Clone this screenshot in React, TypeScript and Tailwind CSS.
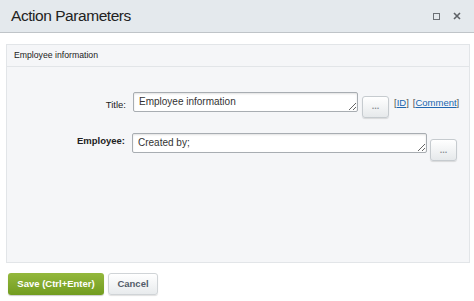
import React from "react";

function DotsButton() {
  return (
    <button className="h-[22px] w-[27px] shrink-0 rounded-[3px] border border-[#c6cbcf] bg-gradient-to-b from-white to-[#e6e9eb] text-[9px] font-bold leading-none text-[#8a9096] shadow-[0_1px_1px_rgba(0,0,0,0.12)]">
      ...
    </button>
  );
}

export default function App() {
  return (
    <div className="flex h-[301px] w-[474px] flex-col bg-white font-['Liberation_Sans',Arial,sans-serif] text-[#222]">
      <header className="flex h-[33px] shrink-0 items-center justify-between border-b border-[#bfc4c8] bg-[#e4e9ed] pl-[11px] pr-[13px]">
        <h1 className="text-[15.5px] tracking-[-0.45px] text-[#222]">Action Parameters</h1>
        <div className="flex items-center gap-[13px] text-[#5d6166]">
          <span className="block h-[7px] w-[7px] border border-[#6b7075]" />
          <svg width="8" height="8" viewBox="0 0 8 8" fill="none" stroke="#5d6166" strokeWidth="1.6">
            <path d="M1 1l6 6M7 1L1 7" />
          </svg>
        </div>
      </header>

      <main className="flex flex-1 flex-col pl-[6px] pr-[4px] pt-[11px]">
        <section className="flex h-[219px] flex-col border border-[#e2e5e8] bg-[#f5f6f8]">
          <div className="flex h-[22px] items-center border-b border-[#e2e5e8] pl-[7px] pt-[1px] text-[8.7px] text-[#222]">
            Employee information
          </div>

          <div className="flex flex-col gap-[15px] pt-[25px]">
            <div className="flex items-start">
              <label className="w-[119px] pt-[6px] text-right text-[9.5px] text-[#222]">Title:</label>
              <textarea
                defaultValue="Employee information"
                className="ml-[7px] h-[20px] w-[225px] resize overflow-hidden rounded-[2px] border border-[#a8adb2] bg-white px-[5px] py-[2px] text-[10px] leading-[14px] text-[#333] shadow-[inset_0_1px_2px_rgba(0,0,0,0.12)] outline-none"
              />
              <div className="ml-[4px]">
                <DotsButton />
              </div>
              <div className="ml-[5px] flex gap-[4px] pt-[4px] text-[9.5px] text-[#555]">
                <span>
                  [<a className="text-[#2067b0] underline">ID</a>]
                </span>
                <span>
                  [<a className="text-[#2067b0] underline">Comment</a>]
                </span>
              </div>
            </div>

            <div className="flex items-start">
              <label className="w-[118px] pt-[1px] text-right text-[9.5px] font-bold text-[#222]">Employee:</label>
              <textarea
                defaultValue="Created by;"
                className="ml-[7px] h-[20px] w-[295px] resize overflow-hidden rounded-[2px] border border-[#a8adb2] bg-white px-[5px] py-[2px] text-[10px] leading-[14px] text-[#333] shadow-[inset_0_1px_2px_rgba(0,0,0,0.12)] outline-none"
              />
              <div className="ml-[3px] pt-[3px]">
                <DotsButton />
              </div>
            </div>
          </div>
        </section>

        <footer className="flex gap-[4px] pl-[2px] pt-[10px]">
          <button className="h-[22px] w-[96px] rounded-[3px] bg-gradient-to-b from-[#94b83c] to-[#729c1f] text-[9.5px] font-bold text-white shadow-[0_1px_1px_rgba(0,0,0,0.2)]">
            Save (Ctrl+Enter)
          </button>
          <button className="h-[22px] w-[50px] rounded-[3px] border border-[#d0d4d7] bg-gradient-to-b from-white to-[#e8ebed] text-[9.5px] font-bold text-[#535c69] shadow-[0_1px_1px_rgba(0,0,0,0.12)]">
            Cancel
          </button>
        </footer>
      </main>
    </div>
  );
}
